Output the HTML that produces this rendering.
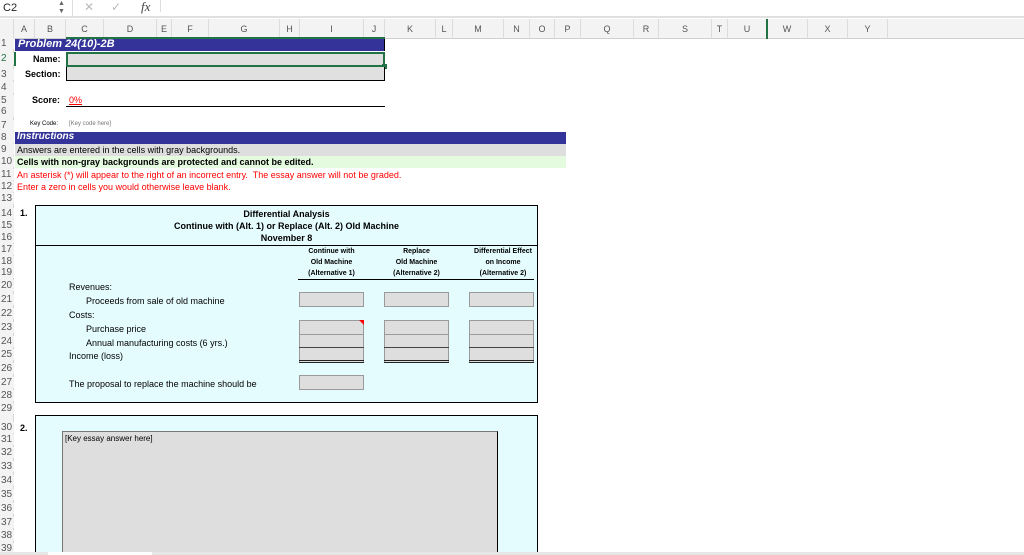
<!DOCTYPE html>
<html style="width:1024px;height:555px;overflow:hidden"><head><style>
*{margin:0;padding:0;box-sizing:border-box}
body{width:1024px;height:555px;overflow:hidden;background:#fff;font-family:"Liberation Sans",Arial,sans-serif;position:relative}
.a{position:absolute;white-space:nowrap}
.hd{position:absolute;top:19px;height:20px;background:#f3f3f3;border-bottom:1px solid #cfcfcf;border-right:1px solid #dcdcdc;font-size:9px;color:#555;text-align:center;line-height:20px}
.rn{position:absolute;left:0;width:14px;font-size:10px;color:#555;text-align:left;padding-left:1px;background:#f3f3f3}
.in{position:absolute;background:#dedede;border:1px solid #9a9a9a}
.t{font-size:9px;color:#000}
.b{font-weight:bold}
</style></head><body>
<div class="a" style="left:0;top:0;width:1024px;height:18px;background:#fff;border-bottom:2px solid #e0e0e0"></div>
<div class="a" style="left:3px;top:2px;font-size:11px;color:#222">C2</div>
<div class="a" style="left:58px;top:0;font-size:7px;color:#666;line-height:8px">▲<br>▼</div>
<div class="a" style="left:72px;top:0;width:1px;height:18px;background:#ddd"></div>
<div class="a" style="left:84px;top:0;font-size:12px;color:#bbb">✕</div>
<div class="a" style="left:111px;top:0;font-size:12px;color:#bbb">✓</div>
<div class="a" style="left:141px;top:-1px;font-size:13px;color:#444;font-family:'Liberation Serif',serif;font-style:italic">fx</div>
<div class="a" style="left:160px;top:0;width:1px;height:12px;background:#ddd"></div>
<div class="hd" style="left:0;width:14px"></div>
<div class="hd" style="left:14px;width:21px">A</div>
<div class="hd" style="left:35px;width:31px">B</div>
<div class="hd" style="left:66px;width:38px">C</div>
<div class="hd" style="left:104px;width:53px">D</div>
<div class="hd" style="left:157px;width:15px">E</div>
<div class="hd" style="left:172px;width:37px">F</div>
<div class="hd" style="left:209px;width:71px">G</div>
<div class="hd" style="left:280px;width:20px">H</div>
<div class="hd" style="left:300px;width:64px">I</div>
<div class="hd" style="left:364px;width:21px">J</div>
<div class="hd" style="left:385px;width:51px">K</div>
<div class="hd" style="left:436px;width:17px">L</div>
<div class="hd" style="left:453px;width:51px">M</div>
<div class="hd" style="left:504px;width:26px">N</div>
<div class="hd" style="left:530px;width:25px">O</div>
<div class="hd" style="left:555px;width:26px">P</div>
<div class="hd" style="left:581px;width:53px">Q</div>
<div class="hd" style="left:634px;width:25px">R</div>
<div class="hd" style="left:659px;width:53px">S</div>
<div class="hd" style="left:712px;width:16px">T</div>
<div class="hd" style="left:728px;width:39px">U</div>
<div class="hd" style="left:767px;width:41px">W</div>
<div class="hd" style="left:808px;width:40px">X</div>
<div class="hd" style="left:848px;width:40px">Y</div>
<div class="hd" style="left:888px;width:136px;border-right:none"></div>
<div class="a" style="left:766px;top:19px;width:2px;height:20px;background:#217346"></div>
<div class="a" style="left:66px;top:37px;width:319px;height:2px;background:#217346"></div>
<div class="a" style="left:0;top:39px;width:14px;height:516px;background:#f3f3f3;border-right:1px solid #d6d6d6"></div>
<div class="rn" style="top:38px">1</div><div class="rn" style="top:53px;color:#217346">2</div>
<div class="rn" style="top:69px">3</div><div class="rn" style="top:82px">4</div>
<div class="rn" style="top:95px">5</div><div class="rn" style="top:106px">6</div>
<div class="rn" style="top:120px">7</div><div class="rn" style="top:132px">8</div>
<div class="rn" style="top:144px">9</div><div class="rn" style="top:156px">10</div>
<div class="rn" style="top:169px">11</div><div class="rn" style="top:181px">12</div>
<div class="rn" style="top:193px">13</div><div class="rn" style="top:208px">14</div>
<div class="rn" style="top:220px">15</div><div class="rn" style="top:232px">16</div>
<div class="rn" style="top:244px">17</div><div class="rn" style="top:256px">18</div>
<div class="rn" style="top:267px">19</div><div class="rn" style="top:280px">20</div>
<div class="rn" style="top:294px">21</div><div class="rn" style="top:308px">22</div>
<div class="rn" style="top:322px">23</div><div class="rn" style="top:336px">24</div>
<div class="rn" style="top:349px">25</div><div class="rn" style="top:363px">26</div>
<div class="rn" style="top:377px">27</div><div class="rn" style="top:390px">28</div>
<div class="rn" style="top:403px">29</div><div class="rn" style="top:422px">30</div>
<div class="rn" style="top:434px">31</div><div class="rn" style="top:447px">32</div>
<div class="rn" style="top:461px">33</div><div class="rn" style="top:475px">34</div>
<div class="rn" style="top:489px">35</div><div class="rn" style="top:503px">36</div>
<div class="rn" style="top:517px">37</div><div class="rn" style="top:530px">38</div>
<div class="rn" style="top:543px">39</div>
<div class="a" style="left:14px;top:52px;width:2px;height:14px;background:#217346"></div>
<div class="a" style="left:15px;top:39px;width:370px;height:12px;background:#333399;border-right:1px solid #000"></div>
<div class="a" style="left:18px;top:38px;font-size:11px;font-weight:bold;font-style:italic;color:#fff">Problem 24(10)-2B</div>
<div class="a t b" style="left:33px;top:54px">Name:</div>
<div class="a t b" style="left:25px;top:69px">Section:</div>
<div class="a" style="left:66px;top:52px;width:319px;height:15px;background:#e0e0e0;border:2px solid #217346"></div>
<div class="a" style="left:382px;top:64px;width:5px;height:5px;background:#217346"></div>
<div class="a" style="left:66px;top:67px;width:319px;height:14px;background:#e0e0e0;border:1px solid #000;border-top:none"></div>
<div class="a t b" style="left:32px;top:95px">Score:</div>
<div class="a" style="left:69px;top:95px;font-size:9px;color:#f00;text-decoration:underline">0%</div>
<div class="a" style="left:66px;top:106px;width:319px;height:1px;background:#000"></div>
<div class="a" style="left:30px;top:121px;font-size:6px;color:#000">Key Code:</div>
<div class="a" style="left:69px;top:121px;font-size:6px;color:#777">[Key code here]</div>
<div class="a" style="left:15px;top:132px;width:551px;height:12px;background:#333399"></div>
<div class="a" style="left:17px;top:131px;font-size:10px;font-weight:bold;font-style:italic;color:#fff">Instructions</div>
<div class="a" style="left:15px;top:144px;width:551px;height:12px;background:#dedede"></div>
<div class="a t" style="left:17px;top:145px">Answers are entered in the cells with gray backgrounds.</div>
<div class="a" style="left:15px;top:156px;width:551px;height:12px;background:#e4fbdf"></div>
<div class="a t b" style="left:17px;top:157px">Cells with non-gray backgrounds are protected and cannot be edited.</div>
<div class="a" style="left:17px;top:170px;font-size:9px;color:#f00">An asterisk (*) will appear to the right of an incorrect entry.&nbsp; The essay answer will not be graded.</div>
<div class="a" style="left:17px;top:182px;font-size:9px;color:#f00">Enter a zero in cells you would otherwise leave blank.</div>
<div class="a t b" style="left:20px;top:208px">1.</div>
<div class="a" style="left:35px;top:205px;width:503px;height:198px;background:#e5fcff;border:1px solid #000"></div>
<div class="a" style="left:35px;top:245px;width:503px;height:1px;background:#000"></div>
<div class="a t b" style="left:35px;top:209px;width:503px;text-align:center">Differential Analysis</div>
<div class="a t b" style="left:35px;top:221px;width:503px;text-align:center">Continue with (Alt. 1) or Replace (Alt. 2) Old Machine</div>
<div class="a t b" style="left:35px;top:233px;width:503px;text-align:center">November 8</div>
<div class="a b" style="left:294px;top:246px;width:75px;text-align:center;font-size:7px;line-height:11px">Continue with<br>Old Machine<br>(Alternative 1)</div>
<div class="a b" style="left:379px;top:246px;width:75px;text-align:center;font-size:7px;line-height:11px">Replace<br>Old Machine<br>(Alternative 2)</div>
<div class="a b" style="left:463px;top:246px;width:80px;text-align:center;font-size:7px;line-height:11px">Differential Effect<br>on Income<br>(Alternative 2)</div>
<div class="a" style="left:298px;top:279px;width:236px;height:1px;background:#000"></div>
<div class="a t" style="left:69px;top:282px">Revenues:</div>
<div class="a t" style="left:86px;top:296px">Proceeds from sale of old machine</div>
<div class="a t" style="left:69px;top:310px">Costs:</div>
<div class="a t" style="left:86px;top:324px">Purchase price</div>
<div class="a t" style="left:86px;top:338px">Annual manufacturing costs (6 yrs.)</div>
<div class="a t" style="left:69px;top:351px">Income (loss)</div>
<div class="a t" style="left:69px;top:379px">The proposal to replace the machine should be</div>
<div class="in" style="left:299px;top:292px;width:65px;height:15px"></div>
<div class="in" style="left:384px;top:292px;width:65px;height:15px"></div>
<div class="in" style="left:469px;top:292px;width:65px;height:15px"></div>
<div class="in" style="left:299px;top:320px;width:65px;height:43px"></div>
<div class="in" style="left:384px;top:320px;width:65px;height:43px"></div>
<div class="in" style="left:469px;top:320px;width:65px;height:43px"></div>
<div class="a" style="left:299px;top:334px;width:235px;height:1px;background:#9a9a9a"></div>
<div class="a" style="left:299px;top:347px;width:235px;height:1px;background:#444"></div>
<div class="a" style="left:299px;top:360px;width:235px;height:1px;background:#222"></div>
<div class="a" style="left:299px;top:362px;width:235px;height:1px;background:#222"></div>
<div class="a" style="left:364px;top:334px;width:20px;height:30px;background:#e5fcff"></div>
<div class="a" style="left:449px;top:334px;width:20px;height:30px;background:#e5fcff"></div>
<div class="a" style="left:359px;top:320px;width:0;height:0;border-top:5px solid #f00;border-left:5px solid transparent"></div>
<div class="in" style="left:299px;top:375px;width:65px;height:15px"></div>
<div class="a t b" style="left:20px;top:423px">2.</div>
<div class="a" style="left:35px;top:415px;width:503px;height:140px;background:#e5fcff;border:1px solid #000;border-bottom:none"></div>
<div class="a" style="left:62px;top:431px;width:436px;height:124px;background:#dedede;border:1px solid #000;border-bottom:none;border-top-color:#777;border-left-color:#777"></div>
<div class="a" style="left:65px;top:434px;font-size:8px;color:#000">[Key essay answer here]</div>
<div class="a" style="left:0;top:552px;width:1024px;height:3px;background:#e6e6e6"></div>
<div class="a" style="left:48px;top:552px;width:104px;height:3px;background:#fff"></div>
</body></html>
